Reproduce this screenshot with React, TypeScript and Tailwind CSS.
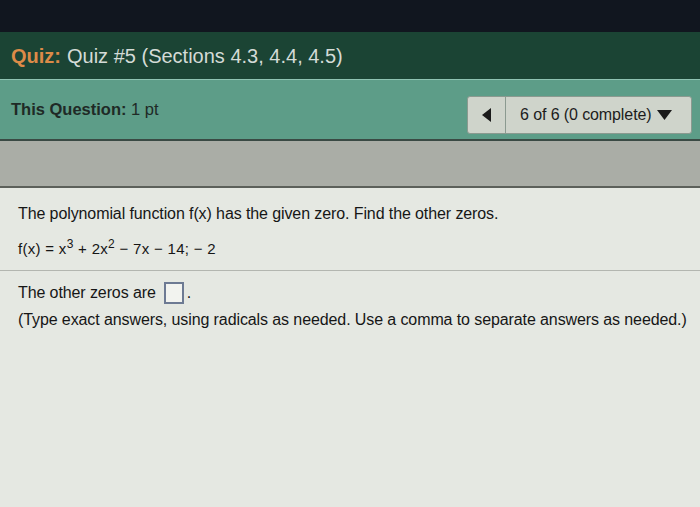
export default function App() {
  return (
    <div className="flex h-[507px] w-[700px] flex-col overflow-hidden bg-[#e5e8e2] font-['Liberation_Sans',Arial,sans-serif] text-[#161616]">
      <div className="h-[32px] shrink-0 bg-[#11161f]" />
      <div className="flex h-[47px] shrink-0 items-center bg-[#1b4434] pl-[11px] text-[20px] text-[#d4dbd7]">
        <span className="mr-[6px] font-bold text-[#dc8b48]">Quiz:</span>
        <span>Quiz #5 (Sections 4.3, 4.4, 4.5)</span>
      </div>
      <div className="flex h-[62px] shrink-0 items-start justify-between border-t border-[#8fc3b2] border-b-2 border-b-[#3a4a44] bg-[#5d9d88] pl-[11px]">
        <p className="mt-[21px] text-[16.5px] leading-none font-bold text-[#1f2a26]">
          This Question: <span className="font-normal">1 pt</span>
        </p>
        <div className="mr-[8px] mt-[16px] flex h-[38px] w-[225px] overflow-hidden rounded-[3px] border border-[#8b9a90] bg-[#cfd4cb]">
          <button className="flex w-[38px] items-center justify-center border-r border-[#8b9a90]">
            <svg width="10" height="14" viewBox="0 0 10 14"><path d="M9 0 L0 7 L9 14 Z" fill="#1a1a1a" /></svg>
          </button>
          <div className="flex items-center gap-[5px] pl-[14px] text-[16px] tracking-[-0.1px] text-[#1c1c1c]">
            <span>6 of 6 (0 complete)</span>
            <svg width="15" height="10" viewBox="0 0 15 10"><path d="M0 0 H15 L7.5 10 Z" fill="#1a1a1a" /></svg>
          </div>
        </div>
      </div>
      <div className="h-[47px] shrink-0 border-b-2 border-b-[#5c605a] bg-[#aaada6]" />
      <div className="flex flex-1 flex-col pt-[14px]">
        <p className="pl-[18px] text-[16px] tracking-[-0.1px]">The polynomial function f(x) has the given zero. Find the other zeros.</p>
        <p className="mt-[12px] pl-[18px] text-[15px] leading-[22px] tracking-[0.3px]">
          f(x) = x<sup className="text-[12px]">3</sup> + 2x<sup className="text-[12px]">2</sup> − 7x − 14; − 2
        </p>
        <div className="mt-[10px] h-px bg-[#b3b6b0]" />
        <p className="mt-[10px] flex items-center pl-[18px] text-[16px] tracking-[-0.1px]">
          The other zeros are
          <span className="mx-[3px] ml-[8px] inline-block h-[22px] w-[20px] border-2 border-[#6d7a93] bg-[#f2f3ef]" />.
        </p>
        <p className="mt-[3px] pl-[18px] text-[16px] tracking-[-0.1px]">
          (Type exact answers, using radicals as needed. Use a comma to separate answers as needed.)
        </p>
      </div>
    </div>
  );
}
